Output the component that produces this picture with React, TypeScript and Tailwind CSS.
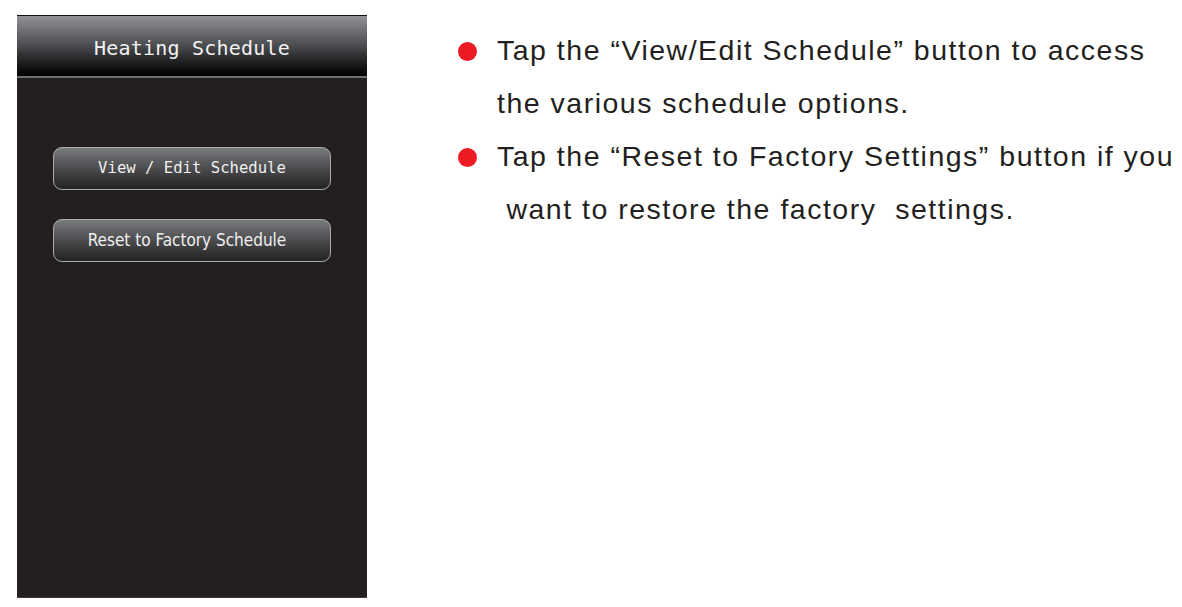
export default function App() {
  const bullets = [
    ['Tap the \u201cView/Edit Schedule\u201d button to access', 'the various schedule options.'],
    ['Tap the \u201cReset to Factory Settings\u201d button if you', ' want to restore the factory  settings.'],
  ]

  return (
    <div className="flex h-[607px] w-[1182px] bg-white">
      <div className="ml-[17px] mt-[15px] flex h-[583px] w-[350px] flex-col bg-[#231f20] border-b border-[#3a3a3a]">
        <div className="flex h-[63px] items-center justify-center border-t border-[#111] bg-gradient-to-b from-[#929397] via-[#4a4b4e] to-[#030303] border-b-2 border-b-[#6e6e6e] pt-[4px]">
          <span className="font-['DejaVu_Sans_Mono',monospace] text-[20px] tracking-[0.2px] text-[#f2f2f2]">
            Heating Schedule
          </span>
        </div>
        <div className="flex flex-col gap-[29px] px-[36px] pt-[69px]">
          <button className="flex h-[43px] items-center justify-center rounded-[9px] border border-[#a9a9ab] bg-gradient-to-b from-[#7a7b7e] to-[#222224] font-['DejaVu_Sans_Mono',monospace] text-[15.6px] text-[#f0f0f0]">
            View / Edit Schedule
          </button>
          <button className="flex h-[43px] items-center justify-center rounded-[9px] border border-[#a9a9ab] bg-gradient-to-b from-[#7a7b7e] to-[#222224] pr-[10px] font-['DejaVu_Sans_Condensed','DejaVu_Sans',sans-serif] text-[17px] text-[#f0f0f0] [font-stretch:condensed]">
            Reset to Factory Schedule
          </button>
        </div>
      </div>
      <div className="ml-[91px] mt-[24px] flex flex-col font-['Liberation_Sans',Arial,sans-serif] text-[28.5px] leading-[53px] tracking-[1.5px] text-[#231f20]">
        {bullets.map(([a, b]) => (
          <div key={a} className="flex">
            <div className="mt-[18px] mr-[20px] h-[19px] w-[19px] shrink-0 rounded-full bg-[#ed1c24]" />
            <div className="flex flex-col whitespace-pre">
              <span>{a}</span>
              <span>{b}</span>
            </div>
          </div>
        ))}
      </div>
    </div>
  )
}
